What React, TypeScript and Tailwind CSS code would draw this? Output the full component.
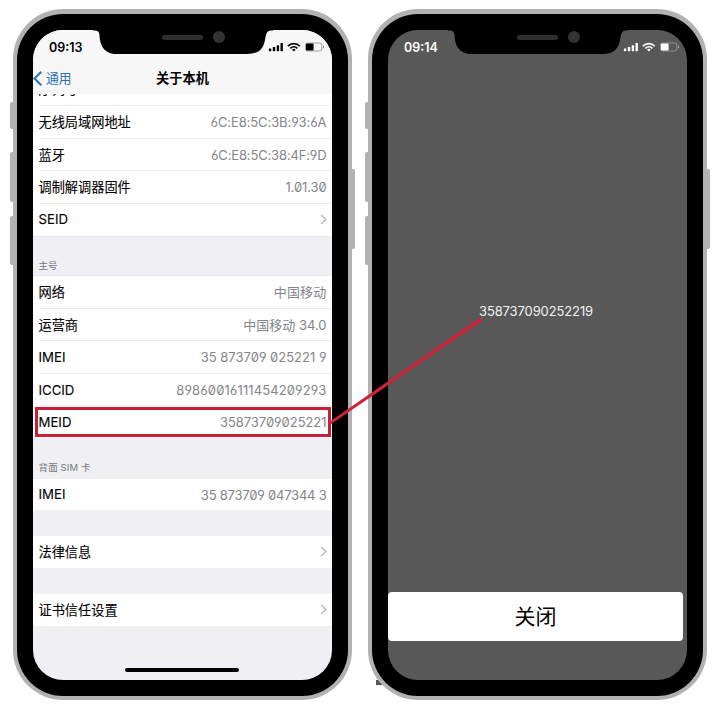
import type { ReactNode } from 'react'
import clsx from 'clsx'

type RowProps = {
    label: string
    value?: string
    valueClass?: string
    height?: string
    last?: boolean
}

function StatusIcons() {
    return (
        <svg width="58" height="12" viewBox="0 0 58 12" fill="none">
            {/* Signal */}
            <g fill="currentColor">
                <rect x="0.9" y="6.4" width="2.4" height="2.8" rx="0.6" />
                <rect x="4.8" y="5" width="2.4" height="4.2" rx="0.6" />
                <rect x="8.7" y="3.2" width="2.4" height="6" rx="0.6" />
                <rect x="12.5" y="1" width="2.4" height="8.2" rx="0.6" />
            </g>
            {/* Wifi */}
            <g stroke="currentColor" strokeWidth="1.7">
                <path d="M19.9 4.1a8.4 8.4 0 0 1 11.8 0" />
                <path d="M22.3 6.4a5 5 0 0 1 7 0" />
            </g>
            <path d="M24 7.7a2.6 2.6 0 0 1 3.6 0l-1.8 1.9z" fill="currentColor" />
            {/* Battery */}
            <rect x="37.5" y="1" width="16.4" height="8" rx="2" stroke="currentColor" strokeOpacity="0.35" />
            <rect x="38" y="1.5" width="7.6" height="7" rx="1" fill="currentColor" />
            <path d="M55 3.5c1.6.6 1.6 2.5 0 3.1z" fill="currentColor" fillOpacity="0.45" />
        </svg>
    )
}

function Notch() {
    return (
        <svg className="absolute left-0 top-0" width="299" height="25" viewBox="0 0 299 25">
            <path
                d="M60 -1V0.4H62Q66 0.4 66.4 4.5C67 16 71 24 84 24H214C227 24 231 18 232.4 7.5Q233.4 0.4 237.5 0.4H240V-1Z"
                fill="#000"
            />
        </svg>
    )
}

function Phone({ time, dark, children }: { time: string; dark?: boolean; children: ReactNode }) {
    return (
        <div className="relative flex h-[691px] w-[345px] px-[3px]">
            {/* Side buttons */}
            <div className="absolute left-0 top-[93px] h-[27px] w-[6px] rounded-l-[2px] bg-[#b2b2b2]" />
            <div className="absolute left-0 top-[143px] h-[50px] w-[6px] rounded-l-[2px] bg-[#b2b2b2]" />
            <div className="absolute left-0 top-[207px] h-[49px] w-[6px] rounded-l-[2px] bg-[#b2b2b2]" />
            <div className="absolute right-0 top-[160px] h-[80px] w-[6px] rounded-r-[2px] bg-[#b2b2b2]" />

            <div className="relative w-full rounded-[50px] bg-[#b2b2b2] px-[4px] pb-[4px] pt-[5px]">
                <div className="h-full rounded-[46px] bg-black px-[16px] py-[16px]">
                    <div
                        className={clsx(
                            'relative flex h-[650px] w-[299px] flex-col overflow-hidden rounded-[30px]',
                            dark ? 'bg-[#585858] text-white' : 'bg-[#efeff4] text-black',
                        )}
                    >
                        <div
                            className={clsx(
                                'flex h-[32px] shrink-0 items-center justify-between pl-[16px] pr-[6px]',
                                !dark && 'bg-[#f7f7f7]',
                            )}
                        >
                            <span className="mt-[4px] text-[12.5px] font-semibold leading-none">{time}</span>
                            <div className="mt-[4px]">
                                <StatusIcons />
                            </div>
                        </div>
                        {children}
                        <Notch />
                    </div>
                </div>
                {/* Speaker and camera */}
                <div className="absolute left-[149px] top-[26px] h-[5px] w-[41px] rounded-full bg-[#2e2e2e]" />
                <div className="absolute left-[200px] top-[22px] size-[12px] rounded-full bg-[#333]" />
            </div>
        </div>
    )
}

function Chevron() {
    return (
        <svg className="-mt-[2px]" width="7" height="11" viewBox="0 0 7 11" fill="none" stroke="#b9b9bd" strokeWidth="1.3">
            <path d="M1 1l5 4.5-5 4.5" />
        </svg>
    )
}

function Row({ label, value, valueClass, height = 'h-[32.5px]', last }: RowProps) {
    return (
        <div className={clsx('shrink-0 bg-white pl-[5.5px]', height)}>
            <div
                className={clsx(
                    'flex h-full items-center justify-between border-b pr-[5.5px] pt-[2px]',
                    last ? 'border-transparent' : 'border-[#ededef]',
                )}
            >
                <span className="whitespace-nowrap text-[13.2px] leading-none [-webkit-text-stroke:0.1px_currentColor]">
                    {label}
                </span>
                {value ? (
                    <span
                        className={clsx(
                            "whitespace-nowrap text-[13px] leading-none text-[#858589] [font-feature-settings:'cv03','cv04','zero']",
                            valueClass,
                        )}
                    >
                        {value}
                    </span>
                ) : (
                    <Chevron />
                )}
            </div>
        </div>
    )
}

function AboutScreen() {
    return (
        <>
            <div className="grid h-[32px] shrink-0 grid-cols-3 items-center bg-[#f7f7f7]">
                <div className="flex items-center gap-[4px] text-[#2b70b5]">
                    <svg width="9" height="15" viewBox="0 0 9 15" fill="none" stroke="currentColor" strokeWidth="2">
                        <path d="M8.3 0.8L1.5 7.5l6.8 6.7" />
                    </svg>
                    <span className="mt-[2px] text-[12.8px] leading-none">通用</span>
                </div>
                <span className="mt-px text-center text-[13.2px] font-bold leading-none">关于本机</span>
            </div>
            <div className="flex h-[12px] shrink-0 flex-col justify-end overflow-hidden bg-white pl-[5.5px]">
                <div className="flex h-[12px] items-start justify-between overflow-hidden border-b border-[#ededef] pr-[5.5px]">
                    <span className="-mt-[11px] text-[13.2px] leading-none [-webkit-text-stroke:0.1px_currentColor]">序列号</span>
                    <span className="-mt-[11px] text-[13px] leading-none text-[#858589]">G6TWN8C8JCL8</span>
                </div>
            </div>
            <Row label="无线局域网地址" value="6C:E8:5C:3B:93:6A" valueClass="tracking-[-0.1px]" />
            <Row label="蓝牙" value="6C:E8:5C:38:4F:9D" valueClass="tracking-[-0.15px]" />
            <Row label="调制解调器固件" value="1.01.30" valueClass="tracking-[-0.1px]" />
            <Row label="SEID" height="h-[32px]" last />

            <div className="flex h-[40.5px] shrink-0 items-end border-y border-[#e9e9ec] pb-[5px] pl-[5.5px] text-[9.5px] leading-none text-[#76767b]">
                主号
            </div>
            <Row label="网络" value="中国移动" valueClass="tracking-[0.2px]" />
            <Row label="运营商" value="中国移动 34.0" valueClass="[font-feature-settings:normal]" />
            <Row label="IMEI" value="35 873709 025221 9" />
            <Row label="ICCID" value="89860016111454209293" valueClass="tracking-[0.1px]" />
            <div className="relative">
                <Row label="MEID" value="35873709025221" height="h-[31.5px]" valueClass="tracking-[-0.05px]" last />
                <div className="absolute left-[2px] top-[0.5px] h-[30px] w-[296px] border-[3px] border-[#c91f37]" />
            </div>

            <div className="flex h-[41.5px] shrink-0 items-end pb-[7px] pl-[5.5px] text-[9.5px] leading-none tracking-[0.15px] text-[#76767b]">
                背面 SIM 卡
            </div>
            <Row label="IMEI" value="35 873709 047344 3" height="h-[31px]" valueClass="tracking-[-0.22px]" last />
            <div className="h-[26px] shrink-0" />
            <Row label="法律信息" height="h-[32px]" last />
            <div className="h-[26px] shrink-0" />
            <Row label="证书信任设置" height="h-[32px]" last />

            <div className="mb-[8px] mt-auto h-[4px] w-[114px] -translate-x-px self-center rounded-full bg-black" />
        </>
    )
}

function NumberScreen() {
    return (
        <>
            <p className="mt-[242px] pr-[3px] text-center text-[13px] leading-[14px] tracking-[-0.12px] text-[#f2f2f2]">
                358737090252219
            </p>
            <button className="mb-[39px] mt-auto flex h-[49px] w-[295px] items-center justify-center rounded-[4px] bg-white text-[21px] leading-none text-black">
                关闭
            </button>
        </>
    )
}

export default function App() {
    return (
        <div className="relative flex h-[710px] w-[720px] gap-[10px] overflow-hidden bg-white pl-[10px] pt-[9px] font-[Inter,'Noto_Sans_CJK_SC',sans-serif]">
            <div className="absolute left-[376px] top-[680px] h-[5px] w-[10px] bg-[#555]" />
            <Phone time="09:13">
                <AboutScreen />
            </Phone>
            <Phone time="09:14" dark>
                <NumberScreen />
            </Phone>

            {/* Pointer from the MEID row to the number */}
            <svg className="absolute left-0 top-0" width="720" height="710" viewBox="0 0 720 710">
                <path d="M329.5 421.8L480 317.4L482.5 320.8L330.5 424.6Z" fill="#c9253a" />
            </svg>
        </div>
    )
}
